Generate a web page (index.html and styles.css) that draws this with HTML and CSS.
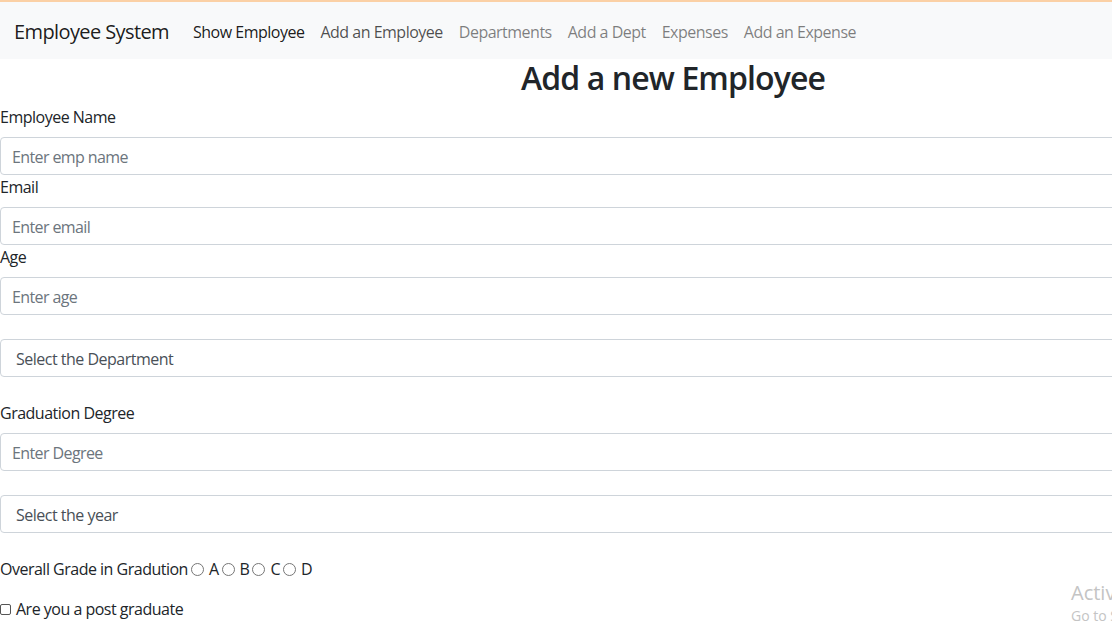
FILE: index.html
```html
<!DOCTYPE html>
<html lang="en">
<head>
<meta charset="utf-8">
<title>Employee System</title>
<link rel="stylesheet" href="styles.css">
</head>
<body>
<div class="topline"></div>
<nav class="navbar">
  <span class="brand">Employee System</span>
  <a class="nav-link active">Show Employee</a>
  <a class="nav-link semi">Add an Employee</a>
  <a class="nav-link">Departments</a>
  <a class="nav-link">Add a Dept</a>
  <a class="nav-link">Expenses</a>
  <a class="nav-link">Add an Expense</a>
</nav>
<main class="page">
  <h1 class="title">Add a new Employee</h1>
  <form class="form">
    <label class="label">Employee Name</label>
    <input class="control" type="text" placeholder="Enter emp name">
    <label class="label">Email</label>
    <input class="control" type="text" placeholder="Enter email">
    <label class="label">Age</label>
    <input class="control" type="text" placeholder="Enter age">
    <div class="spacer"></div>
    <div class="control select">Select the Department</div>
    <div class="spacer"></div>
    <label class="label">Graduation Degree</label>
    <input class="control" type="text" placeholder="Enter Degree">
    <div class="spacer"></div>
    <div class="control select">Select the year</div>
    <div class="spacer"></div>
    <div class="radio-row">
      <span>Overall Grade in Gradution</span><input type="radio" name="g"><span>A</span><input type="radio" name="g"><span>B</span><input type="radio" name="g"><span>C</span><input type="radio" name="g"><span>D</span>
    </div>
    <div class="check-row">
      <input type="checkbox"><span>Are you a post graduate</span>
    </div>
  </form>
</main>
<div class="watermark">
  <div class="wm-title">Activate Windows</div>
  <div class="wm-sub">Go to Settings to activate Windows.</div>
</div>
</body>
</html>
```

FILE: styles.css
```css
html, body {
  margin: 0;
  padding: 0;
  overflow: hidden;
  background: #fff;
}
body {
  font-family: "Open Sans", "Noto Sans", sans-serif;
  font-size: 16px;
  line-height: 24px;
  color: #212529;
  width: 1112px;
  height: 632px;
  position: relative;
}
.topline {
  height: 2px;
  background: #fbd0a5;
}
.navbar {
  box-sizing: border-box;
  display: flex;
  align-items: center;
  height: 57px;
  padding: 3px 16px 0 14px;
  background: #f8f9fa;
}
.brand {
  font-size: 20px;
  line-height: 28px;
  color: rgba(0,0,0,.9);
  margin-right: 16px;
  letter-spacing: -0.6px;
}
.nav-link {
  padding: 0 8px;
  color: rgba(0,0,0,.5);
  letter-spacing: -0.5px;
  cursor: pointer;
}
.nav-link.active { color: rgba(0,0,0,.9); }
.nav-link.semi { color: rgba(0,0,0,.7); }
.page {
  width: 1346px;
}
.title {
  margin: 0 0 8px;
  font-size: 32px;
  font-weight: 600;
  line-height: 38px;
  text-align: center;
  letter-spacing: -0.9px;
}
.form {
  display: flex;
  flex-direction: column;
}
.label {
  display: block;
  margin-bottom: 8px;
  letter-spacing: -0.5px;
}
.control {
  box-sizing: border-box;
  display: block;
  width: 100%;
  height: 38px;
  padding: 7px 12px 5px 11px;
  font: inherit;
  font-size: 16px;
  color: #495057;
  background: #fff;
  border: 1px solid #ced4da;
  border-radius: 4px;
  outline: none;
  letter-spacing: -0.6px;
  margin: 0;
}
.control::placeholder { color: #6c757d; opacity: 1; }
.select {
  padding-left: 15px;
  line-height: 24px;
  letter-spacing: -0.5px;
}
.spacer { height: 24px; }
.radio-row, .check-row {
  display: flex;
  align-items: center;
  height: 24px;
  letter-spacing: -0.5px;
  white-space: nowrap;
}
.radio-row input {
  appearance: none;
  -webkit-appearance: none;
  box-sizing: border-box;
  width: 13px;
  height: 13px;
  border: 1px solid #767676;
  border-radius: 50%;
  background: #fff;
  margin: 0 5px 0 3px;
}
.check-row { margin-top: 16px; }
.check-row input {
  appearance: none;
  -webkit-appearance: none;
  box-sizing: border-box;
  width: 11px;
  height: 11px;
  border: 1px solid #555;
  border-radius: 2px;
  background: #fff;
  margin: 0 5px 0 0;
}
.watermark {
  position: absolute;
  left: 1071px;
  top: 580px;
  color: #c4c4c4;
  white-space: nowrap;
}
.wm-title { font-size: 20px; line-height: 26px; }
.wm-sub { font-size: 14px; line-height: 20px; }
```
